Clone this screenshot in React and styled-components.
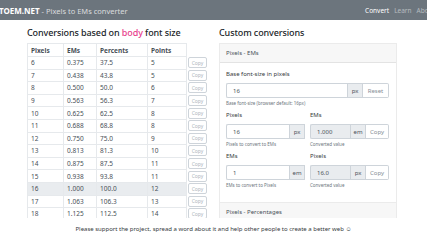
import React from 'react'
import styled, { createGlobalStyle } from 'styled-components';

const GlobalStyle = createGlobalStyle`
    body {
        margin: 0;
        background: #fff;
        font-family: "Noto Sans", "Open Sans", sans-serif;
        color: #212529;
        overflow: hidden;
    }
`;

const rows = [
    [6, '0.375', '37.5', 5],
    [7, '0.438', '43.8', 5],
    [8, '0.500', '50.0', 6],
    [9, '0.563', '56.3', 7],
    [10, '0.625', '62.5', 8],
    [11, '0.688', '68.8', 8],
    [12, '0.750', '75.0', 9],
    [13, '0.813', '81.3', 10],
    [14, '0.875', '87.5', 11],
    [15, '0.938', '93.8', 11],
    [16, '1.000', '100.0', 12],
    [17, '1.063', '106.3', 13],
    [18, '1.125', '112.5', 14],
];

function App() {
    return (
        <Page>
            <GlobalStyle />
            <Navbar>
                <Brand><b>TOEM.NET</b> - Pixels to EMs converter</Brand>
                <NavLinks>
                    <NavLink $active>Convert</NavLink>
                    <NavLink>Learn</NavLink>
                    <NavLink>About</NavLink>
                </NavLinks>
            </Navbar>

            <Main>
                <Column>
                    <Heading>Conversions based on <Code>body</Code> font size</Heading>
                    <ScrollBox>
                        <Table>
                            <colgroup>
                                <col style={{ width: 36 }} />
                                <col style={{ width: 33 }} />
                                <col style={{ width: 51 }} />
                                <col style={{ width: 39 }} />
                                <col style={{ width: 21 }} />
                            </colgroup>
                            <thead>
                                <tr>
                                    <Th>Pixels</Th>
                                    <Th>EMs</Th>
                                    <Th>Percents</Th>
                                    <Th>Points</Th>
                                    <Th $bare />
                                </tr>
                            </thead>
                            <tbody>
                                {rows.map(r => (
                                    <Tr key={r[0]} $hl={r[0] === 16}>
                                        <Td>{r[0]}</Td>
                                        <Td>{r[1]}</Td>
                                        <Td>{r[2]}</Td>
                                        <Td>{r[3]}</Td>
                                        <BtnCell><SmallBtn>Copy</SmallBtn></BtnCell>
                                    </Tr>
                                ))}
                            </tbody>
                        </Table>
                    </ScrollBox>
                </Column>

                <Column>
                    <Heading>Custom conversions</Heading>
                    <ScrollBox>
                        <Card>
                            <CardHeader>Pixels - EMs</CardHeader>
                            <CardBody>
                                <Field>
                                    <Label>Base font-size in pixels</Label>
                                    <InputGroup>
                                        <Input defaultValue="16" />
                                        <Addon>px</Addon>
                                        <GroupBtn $wide>Reset</GroupBtn>
                                    </InputGroup>
                                    <Help>Base font-size (browser default: 16px)</Help>
                                </Field>
                                <FieldRow>
                                    <Field>
                                        <Label>Pixels</Label>
                                        <InputGroup>
                                            <Input defaultValue="16" />
                                            <Addon>px</Addon>
                                        </InputGroup>
                                        <Help>Pixels to convert to EMs</Help>
                                    </Field>
                                    <Field>
                                        <Label>EMs</Label>
                                        <InputGroup>
                                            <Input defaultValue="1.000" readOnly $ro />
                                            <Addon>em</Addon>
                                            <GroupBtn>Copy</GroupBtn>
                                        </InputGroup>
                                        <Help>Converted value</Help>
                                    </Field>
                                </FieldRow>
                                <FieldRow>
                                    <Field>
                                        <Label>EMs</Label>
                                        <InputGroup>
                                            <Input defaultValue="1" />
                                            <Addon>em</Addon>
                                        </InputGroup>
                                        <Help>EMs to convert to Pixels</Help>
                                    </Field>
                                    <Field>
                                        <Label>Pixels</Label>
                                        <InputGroup>
                                            <Input defaultValue="16.0" readOnly $ro />
                                            <Addon>px</Addon>
                                            <GroupBtn>Copy</GroupBtn>
                                        </InputGroup>
                                        <Help>Converted value</Help>
                                    </Field>
                                </FieldRow>
                            </CardBody>
                        </Card>
                        <Card>
                            <CardHeader>Pixels - Percentages</CardHeader>
                        </Card>
                    </ScrollBox>
                </Column>
            </Main>

            <Footer>Please support the project, spread a word about it and help other people to create a better web ☺</Footer>
        </Page>
    )
}

const Page = styled.div`
    width: 427px;
    height: 240px;
    overflow: hidden;
`;

const Navbar = styled.nav`
    height: 20px;
    background: #6c757d;
    display: flex;
    align-items: center;
    justify-content: space-between;
    overflow: hidden;
    font-size: 7.5px;
`;

const Brand = styled.div`
    color: rgba(255,255,255,.75);
    margin-left: -1px;
    white-space: nowrap;

    b {
        color: #fff;
        font-weight: 700;
        font-size: 8px;
    }
`;

const NavLinks = styled.div`
    display: flex;
    gap: 5px;
    margin-right: -8px;
    white-space: nowrap;
    font-size: 6.5px;
`;

const NavLink = styled.span`
    color: ${p => p.$active ? '#fff' : 'rgba(255,255,255,.5)'};
`;

const Main = styled.main`
    display: grid;
    grid-template-columns: 181px 178px;
    column-gap: 11px;
    padding-left: 27px;
`;

const Column = styled.section`
    display: flex;
    flex-direction: column;
    min-width: 0;
`;

const Heading = styled.h2`
    margin: 6px 0 4px 0;
    height: 13px;
    font-size: 9px;
    font-weight: 500;
    letter-spacing: -0.1px;
    line-height: 13px;
    white-space: nowrap;
    color: #212529;
`;

const Code = styled.code`
    font-family: inherit;
    color: #e83e8c;
`;

const ScrollBox = styled.div`
    height: 175px;
    overflow: hidden;
`;

const Table = styled.table`
    width: 180px;
    table-layout: fixed;
    border-collapse: collapse;
    font-size: 6.5px;
    color: #495057;
`;

const Th = styled.th`
    height: 12px;
    padding: 0 3px;
    text-align: left;
    font-weight: 700;
    border: ${p => p.$bare ? 'none' : '1px solid #e6e9ec'};
`;

const Tr = styled.tr`
    background: ${p => p.$hl ? '#e9ecef' : 'transparent'};
`;

const Td = styled.td`
    height: 11.6px;
    padding: 0 3px;
    border: 1px solid #e6e9ec;
`;

const BtnCell = styled.td`
    padding: 0 0 0 1px;
    background: #fff;
`;

const SmallBtn = styled.button`
    display: block;
    width: 19px;
    height: 11px;
    padding: 0;
    font-family: inherit;
    font-size: 5px;
    color: #adb5bd;
    background: #fff;
    border: 1px solid #ced4da;
    border-radius: 2px;
`;

const Card = styled.div`
    border: 1px solid rgba(0,0,0,.08);
    border-top: none;
    &:first-child { border-top: 1px solid rgba(0,0,0,.08); }
`;

const CardHeader = styled.div`
    height: 18px;
    padding: 0 6px;
    display: flex;
    align-items: center;
    background: #f7f7f7;
    border-bottom: 1px solid rgba(0,0,0,.08);
    font-size: 6px;
    color: #495057;
`;

const CardBody = styled.div`
    padding: 7px 7px 14px 6px;
    display: flex;
    flex-direction: column;
    gap: 5px;
`;

const FieldRow = styled.div`
    display: grid;
    grid-template-columns: minmax(0, 79px) minmax(0, 1fr);
    column-gap: 5px;
`;

const Field = styled.div`
    display: flex;
    flex-direction: column;
    min-width: 0;
`;

const Label = styled.label`
    font-size: 6px;
    font-weight: 400;
    line-height: 9px;
    margin-bottom: 4px;
    color: #343a40;
`;

const InputGroup = styled.div`
    display: flex;
    height: 15px;
`;

const Input = styled.input`
    flex: 1;
    width: 0;
    min-width: 0;
    box-sizing: border-box;
    height: 15px;
    padding: 0 6px;
    font-family: inherit;
    font-size: 6px;
    color: #495057;
    background: ${p => p.$ro ? '#e9ecef' : '#fff'};
    border: 1px solid #ced4da;
    border-right: none;
    border-radius: 2px 0 0 2px;
    outline: none;
`;

const Addon = styled.span`
    box-sizing: border-box;
    display: flex;
    align-items: center;
    justify-content: center;
    width: 16px;
    font-size: 6px;
    color: #495057;
    background: #e9ecef;
    border: 1px solid #ced4da;
`;

const GroupBtn = styled.button`
    box-sizing: border-box;
    width: ${p => p.$wide ? '26px' : '23px'};
    height: 15px;
    padding: 0;
    font-family: inherit;
    font-size: 6px;
    color: #868e96;
    background: #fff;
    border: 1px solid #ced4da;
    border-left: none;
    border-radius: 0 2px 2px 0;
`;

const Help = styled.small`
    margin-top: 2px;
    font-size: 4.5px;
    line-height: 6px;
    color: #6c757d;
`;

const Footer = styled.p`
    margin: 7px 0 0 0;
    text-align: center;
    font-size: 6px;
    color: #343a40;
`;

export default App;
